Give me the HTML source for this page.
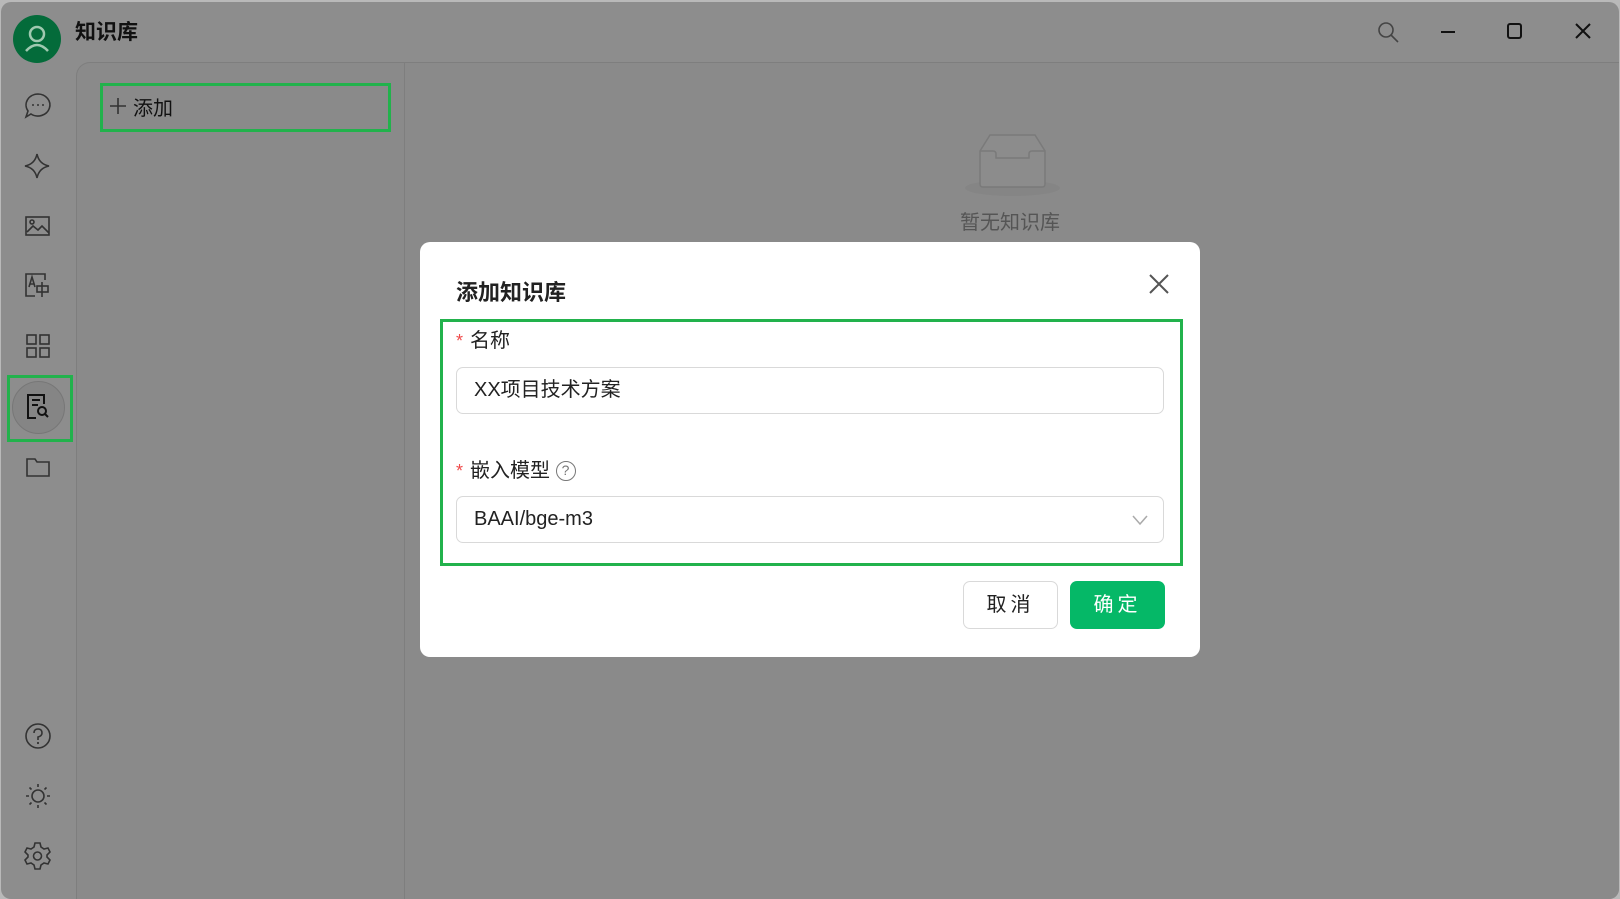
<!DOCTYPE html>
<html><head><meta charset="utf-8"><style>
*{box-sizing:border-box;margin:0;padding:0}
body{width:1620px;height:899px;overflow:hidden;background:#b9b9b9;font-family:"Liberation Sans","Noto Sans CJK SC",sans-serif;position:relative}
.win{position:absolute;left:1px;top:2px;width:1618px;height:897px;background:#8d8d8d;border-radius:10px;overflow:hidden}
.panel{position:absolute;left:75px;top:60px;right:0;bottom:0;background:#8a8a8a;border-top:1px solid #7e7e7e;border-left:1px solid #7e7e7e;border-top-left-radius:14px}
.list{position:absolute;left:0;top:0;width:328px;bottom:0;border-right:1px solid #7e7e7e}
.abs{position:absolute}
svg{position:absolute;overflow:visible}
.ic{stroke:#333;fill:none;stroke-width:1.6}
.dlg{position:absolute;width:780px;height:415px;background:#fff;border-radius:10px}
.inp{position:absolute;left:36px;width:708px;height:47px;border:1px solid #d9d9d9;border-radius:7px;font-size:20px;color:#222;padding-left:17px;line-height:45px}
.lbl{position:absolute;left:36px;font-size:20px;color:#222}
.lbl b{color:#f04a4a;font-weight:normal;margin-right:7px;font-size:18px}
</style></head><body>
<div class="win">
  <div class="abs" style="left:12px;top:13px;width:48px;height:48px;border-radius:50%;background:#046b3a"></div>
  <svg style="left:12px;top:13px" width="48" height="48"><circle cx="24" cy="19" r="7" stroke="#9fc9b0" stroke-width="2.5" fill="none"/><path d="M13 36 Q24 24 35 36" stroke="#9fc9b0" stroke-width="2.5" fill="none"/></svg>
  <div class="abs" style="left:74px;top:14px;font-size:21px;font-weight:bold;color:#111">知识库</div>
  <svg style="left:1376px;top:19px" width="24" height="24"><circle cx="9" cy="9" r="7" class="ic" style="stroke:#444"/><path d="M14 14 L21 21" class="ic" style="stroke:#444"/></svg>
  <svg style="left:1438px;top:19px" width="24" height="24"><path d="M2 11 H16" stroke="#111" stroke-width="2"/></svg>
  <svg style="left:1506px;top:21px" width="24" height="24"><rect x="1" y="1" width="13" height="14" rx="2" stroke="#111" stroke-width="2" fill="none"/></svg>
  <svg style="left:1574px;top:21px" width="24" height="24"><path d="M1 1 L15 15 M15 1 L1 15" stroke="#111" stroke-width="2"/></svg>

  <svg style="left:23px;top:90px" width="28" height="28"><path d="M14 2 A12 11 0 1 1 7 22 L2 25 L4 19 A12 11 0 0 1 14 2Z" class="ic"/><circle cx="9" cy="13" r="1" fill="#333"/><circle cx="14" cy="13" r="1" fill="#333"/><circle cx="19" cy="13" r="1" fill="#333"/></svg>
  <svg style="left:23px;top:151px" width="28" height="28"><path d="M13 1 Q15 11 25 13 Q15 15 13 25 Q11 15 1 13 Q11 11 13 1Z" class="ic"/></svg>
  <svg style="left:24px;top:213px" width="28" height="28"><rect x="1" y="2" width="23" height="18" class="ic"/><circle cx="7" cy="7" r="2" class="ic"/><path d="M2 17 L8 11 L13 15 L17 11 L24 18" class="ic"/></svg>
  <svg style="left:24px;top:271px" width="28" height="28"><path d="M20 7 V1 H1 V23 H10" class="ic"/><path d="M4 14 L7 4 L10 14 M5 11 H9" class="ic" stroke-width="1.3"/><rect x="12" y="13" width="11" height="6" class="ic"/><path d="M17 9 V24" class="ic"/></svg>
  <svg style="left:25px;top:332px" width="28" height="28"><rect x="1" y="1" width="9" height="9" class="ic"/><rect x="14" y="1" width="9" height="9" class="ic"/><rect x="1" y="14" width="9" height="9" class="ic"/><rect x="14" y="14" width="9" height="9" class="ic"/></svg>
  <div class="abs" style="left:6px;top:373px;width:66px;height:67px;border:3px solid #22b24c"></div>
  <div class="abs" style="left:11px;top:379px;width:53px;height:53px;border-radius:50%;border:1px solid #777;background:#858585"></div>
  <svg style="left:26px;top:392px" width="28" height="28"><path d="M17 10 V1 H1 V24 H9" stroke="#111" stroke-width="2" fill="none"/><path d="M5 6 H13 M5 11 H11" stroke="#111" stroke-width="2"/><circle cx="15" cy="17" r="4" stroke="#111" stroke-width="2" fill="none"/><path d="M18 20 L21 23" stroke="#111" stroke-width="2"/></svg>
  <svg style="left:25px;top:454px" width="28" height="28"><path d="M1 3 H9 L11 6 H23 V20 H1Z" class="ic"/></svg>
  <svg style="left:24px;top:721px" width="28" height="28"><circle cx="13" cy="13" r="12" class="ic"/><path d="M9 10 Q9 6 13 6 Q17 6 17 10 Q17 13 13 14 V17" class="ic"/><circle cx="13" cy="20" r="1.1" fill="#333"/></svg>
  <svg style="left:23px;top:780px" width="28" height="28"><circle cx="14" cy="14" r="6" class="ic"/><path d="M14 2v3M14 23v3M2 14h3M23 14h3M5.5 5.5l2 2M20.5 20.5l2 2M5.5 22.5l2-2M20.5 7.5l2-2" class="ic"/></svg>
  <svg style="left:23px;top:840px" width="28" height="28"><path d="M11 1h5l1 4 3 2 4-1 2 4-3 3v2l3 3-2 4-4-1-3 2-1 4h-5l-1-4-3-2-4 1-2-4 3-3v-2l-3-3 2-4 4 1 3-2z" class="ic"/><circle cx="13.5" cy="14" r="4" class="ic"/></svg>

  <div class="panel">
    <div class="list">
      <div class="abs" style="left:23px;top:20px;width:291px;height:49px;border:3px solid #22b24c"></div>
      <svg style="left:33px;top:35px" width="18" height="18"><path d="M8 0 V16 M0 8 H16" stroke="#333" stroke-width="1.6"/></svg>
      <div class="abs" style="left:56px;top:29px;font-size:20px;color:#111">添加</div>
    </div>
    <div class="abs" style="left:888px;top:117px;width:95px;height:16px;border-radius:50%;background:#858585"></div>
    <svg style="left:901px;top:71px" width="70" height="55"><path d="M2 17 L12 1 H57 L67 17 V50 Q67 53 64 53 H5 Q2 53 2 50Z" stroke="#7a7a7a" stroke-width="1.5" fill="#8c8c8c"/><path d="M2 17 H15 Q18 17 18 20 V24 H51 V20 Q51 17 54 17 H67" stroke="#7a7a7a" stroke-width="1.5" fill="none"/></svg>
    <div class="abs" style="left:883px;top:143px;font-size:20px;color:#555">暂无知识库</div>
  </div>

  <div class="dlg" style="left:419px;top:240px">
    <div class="abs" style="left:36px;top:33px;font-size:22px;font-weight:bold;color:#222">添加知识库</div>
    <svg style="left:729px;top:32px" width="20" height="20"><path d="M1 1 L19 19 M19 1 L1 19" stroke="#555" stroke-width="2"/></svg>
    <div class="abs" style="left:20px;top:77px;width:743px;height:247px;border:3px solid #22b24c"></div>
    <div class="lbl" style="top:82px"><b>*</b>名称</div>
    <div class="inp" style="top:125px">XX项目技术方案</div>
    <div class="lbl" style="top:212px"><b>*</b>嵌入模型 <span style="display:inline-block;width:20px;height:20px;border:1.5px solid #777;border-radius:50%;font-size:14px;line-height:17px;text-align:center;color:#777;vertical-align:2px">?</span></div>
    <div class="inp" style="top:254px">BAAI/bge-m3</div>
    <svg style="left:712px;top:273px" width="16" height="10"><path d="M1 1 L8 9 L15 1" stroke="#aaa" stroke-width="1.5" fill="none"/></svg>
    <div class="abs" style="left:543px;top:339px;width:95px;height:48px;border:1px solid #d9d9d9;border-radius:7px;text-align:center;line-height:46px;font-size:20px;color:#222;letter-spacing:4px">取消</div>
    <div class="abs" style="left:650px;top:339px;width:95px;height:48px;background:#05b867;border-radius:7px;text-align:center;line-height:48px;font-size:20px;color:#fff;letter-spacing:4px">确定</div>
  </div>
</div>
</body></html>
